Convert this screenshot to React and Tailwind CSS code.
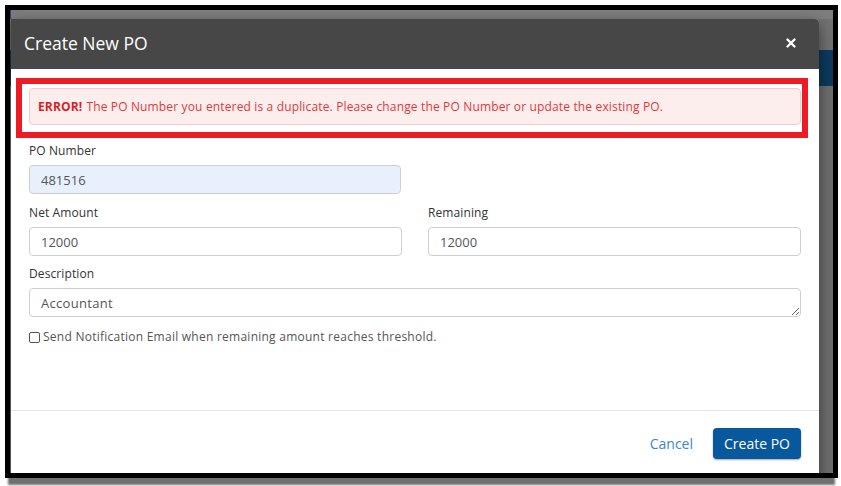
import React from "react";
import { X } from "lucide-react";

function Label({ children }) {
  return (
    <div className="h-[18px] leading-[18px] text-[12px] font-medium text-[#333] mb-[5px] mt-[1px] tracking-[0.1px]">
      {children}
    </div>
  );
}

function Field({ value, autofill }) {
  return (
    <input
      readOnly
      value={value}
      className={
        "block w-full h-[29px] rounded-[4px] border border-[#cfcfcf] px-[11px] text-[13px] text-[#555] outline-none " +
        (autofill ? "bg-[#e8f0fe]" : "bg-white")
      }
    />
  );
}

export default function App() {
  return (
    <div className="w-[841px] h-[486px] bg-white pt-[5px] pl-[5px] font-['Open_Sans',sans-serif]">
      <div className="relative w-[833px] h-[473px] border-[5px] border-black shadow-[0_10px_2px_-3px_#707070] overflow-hidden bg-[#7b7b7b]">
        {/* page behind the backdrop */}
        <div className="flex flex-col h-full">
          <div className="h-[9px] flex">
            <div className="w-[1px] bg-[#1d4e7c]" />
            <div className="flex-1 bg-[#7e7e7e]" />
          </div>
          <div className="h-[31px] bg-[#727272]" />
          <div className="h-[36px] bg-[#0d3a5d]" />
          <div className="flex-1 bg-[#6e6e6e]" />
        </div>

        {/* modal */}
        <div className="absolute left-[1px] top-[9px] w-[808px] h-[470px] bg-white rounded-tr-[4px] overflow-hidden shadow-[0_5px_15px_rgba(0,0,0,0.5)]">
          <div className="h-[50px] bg-[#474747] flex items-center justify-between pl-[13px] pr-[21px]">
            <div className="text-white text-[17.5px] font-medium leading-none">Create New PO</div>
            <X size={14} strokeWidth={4} className="text-white -mt-[3px]" />
          </div>

          <div className="h-[341px] px-[18px] pt-[19px]">
            <div className="h-[37px] rounded-[4px] border border-[#f7c9ce] bg-[#fdeeee] flex items-center pl-[8px] text-[12px] tracking-[0.15px] text-[#dd3a3b]">
              <span className="font-bold text-[#d61f27] mr-[4px]">ERROR!</span>
              The PO Number you entered is a duplicate. Please change the PO Number or update the existing PO.
            </div>

            <div className="mt-[17px] w-[372px]">
              <Label>PO Number</Label>
              <Field value="481516" autofill />
            </div>

            <div className="mt-[9px] grid grid-cols-2 gap-x-[26px]">
              <div>
                <Label>Net Amount</Label>
                <Field value="12000" />
              </div>
              <div>
                <Label>Remaining</Label>
                <Field value="12000" />
              </div>
            </div>

            <div className="mt-[9px]">
              <Label>Description</Label>
              <textarea
                readOnly
                value="Accountant"
                className="block w-full h-[29px] rounded-[4px] border border-[#cfcfcf] px-[11px] py-[5px] leading-[18px] text-[13px] text-[#555] outline-none tracking-[0.3px]"
              />
            </div>

            <div className="mt-[11px] h-[18px] flex items-center text-[12px] tracking-[0.25px] text-[#555]">
              <span className="w-[11px] h-[11px] border border-[#555] rounded-[2px] mr-[3px] bg-white" />
              Send Notification Email when remaining amount reaches threshold.
            </div>
          </div>

          <div className="border-t border-[#e5e5e5] pt-[17px] pr-[18px] flex justify-end items-center gap-[20px]">
            <span className="text-[14px] text-[#3a87c9]">Cancel</span>
            <div className="w-[88px] h-[31px] rounded-[4px] bg-[#07589c] shadow-[0_1px_2px_rgba(0,0,0,0.35)] flex items-center justify-center text-white text-[14px] font-medium">
              Create PO
            </div>
          </div>

          {/* red annotation box */}
          <div className="absolute left-[5px] top-[59px] w-[792px] h-[60px] border-[6px] border-[#ed1c24]" />
        </div>
      </div>
    </div>
  );
}
